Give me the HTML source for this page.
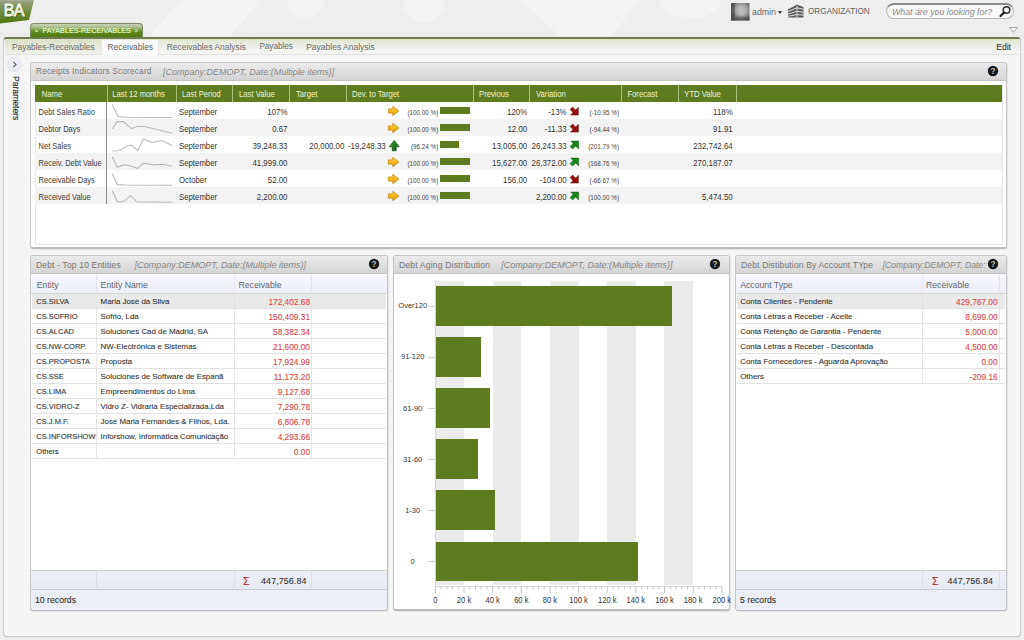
<!DOCTYPE html>
<html><head><meta charset="utf-8"><title>BA</title><style>
html,body{margin:0;padding:0;}
body{width:1024px;height:640px;overflow:hidden;position:relative;background:#efefef;font-family:"Liberation Sans",sans-serif;}
.a{position:absolute;box-sizing:border-box;}
.t{position:absolute;white-space:nowrap;}
.s{-webkit-text-stroke:0.1px currentColor;}
svg{position:absolute;overflow:visible;}
</style></head><body>
<div class="a" style="left:0px;top:0px;width:1024px;height:40px;background:linear-gradient(#efefef,#ededed);"></div>
<svg style="left:0;top:0" width="1024" height="38"><g fill="#ffffff" opacity="0.35"><ellipse cx="306" cy="-2" rx="19" ry="20"/><ellipse cx="424" cy="-2" rx="21" ry="24"/><polygon points="520,0 640,0 612,36 560,36"/><polygon points="180,0 260,0 230,36 150,36"/><ellipse cx="690" cy="4" rx="30" ry="14"/></g></svg>
<svg style="left:0;top:0" width="40" height="30"><defs><linearGradient id="lg" x1="0" y1="0" x2="0" y2="1"><stop offset="0" stop-color="#a4ac94"/><stop offset="0.12" stop-color="#8e9c74"/><stop offset="0.55" stop-color="#6f8a3a"/><stop offset="1" stop-color="#4f7510"/></linearGradient></defs>
<polygon points="0,0 34,0 29,20 0,23.5" fill="url(#lg)"/>
<text x="4.3" y="16.8" font-family="Liberation Sans" font-size="16" fill="#2f4a08" stroke="#2f4a08" stroke-width="1.2" letter-spacing="-0.6" opacity="0.55">BA</text><text x="3.8" y="16.3" font-family="Liberation Sans" font-size="16" fill="#f4f6e4" stroke="#f4f6e4" stroke-width="0.8" letter-spacing="-0.6">BA</text></svg>
<svg style="left:731px;top:2.5px" width="19" height="18"><defs><radialGradient id="av" cx="0.55" cy="0.4" r="0.7"><stop offset="0" stop-color="#c8c8c8"/><stop offset="0.5" stop-color="#9a9a9a"/><stop offset="1" stop-color="#3c3c3c"/></radialGradient></defs>
<rect x="0" y="0" width="18.5" height="17.5" fill="url(#av)"/>
<rect x="0" y="0" width="4" height="17.5" fill="#4a4a4a" opacity="0.6"/><rect x="0" y="14" width="18.5" height="3.5" fill="#555" opacity="0.5"/>
<ellipse cx="10.5" cy="8" rx="4" ry="5" fill="#b8b8b8" opacity="0.7"/></svg>
<div class="t" style="left:752px;top:1.50px;line-height:20px;font-size:8.8px;color:#6a6a6a;font-weight:normal;font-style:normal;">admin</div>
<svg style="left:778px;top:10.5px" width="5" height="4"><polygon points="0,0 4,0 2,3" fill="#333"/></svg>
<svg style="left:788px;top:4px" width="17" height="15">
<polygon points="0,5.5 9,0.5 15.5,3 15.5,13.6 0,13.6" fill="#5c5c5c"/>
<g stroke="#ececec" stroke-width="0.95" fill="none">
<polyline points="0,7.6 9,3.8 15.5,5.4"/><polyline points="0,10.1 9,7.3 15.5,8.3"/><polyline points="0,12.3 9,10.6 15.5,11.1"/>
<line x1="9" y1="1.5" x2="9" y2="13.6" stroke-width="0.8"/>
</g></svg>
<div class="t" style="left:808px;top:1.50px;line-height:20px;font-size:8.2px;color:#5e5e5e;font-weight:normal;font-style:normal;transform:scaleY(1.08);transform-origin:left center;">ORGANIZATION</div>
<div class="a" style="left:886px;top:3px;width:128px;height:16px;border:1px solid #b8b8b8;border-top:2px solid #8a8a8a;border-radius:9px;background:linear-gradient(#f6f6f6,#fafafa);"></div>
<div class="t" style="left:892px;top:1.80px;line-height:20px;font-size:8.8px;color:#8a8a8a;font-weight:normal;font-style:italic;">What are you looking for?</div>
<svg style="left:999px;top:5px" width="13" height="13"><circle cx="7.5" cy="5" r="3.3" fill="none" stroke="#333" stroke-width="1.6"/><line x1="5.2" y1="7.4" x2="1.5" y2="11" stroke="#222" stroke-width="2.2" stroke-linecap="round"/></svg>
<svg style="left:1009px;top:27px" width="10" height="7"><polygon points="0.5,0.5 8.5,0.5 4.5,5.5" fill="#fafafa" stroke="#aaa" stroke-width="1"/></svg>
<div class="a" style="left:30px;top:23.3px;width:113px;height:14.7px;border-radius:4px 4px 0 0;border:1px solid #7d8c64;border-bottom:none;background:linear-gradient(#c9d3b8 0%,#aebf90 22%,#779a3c 45%,#5b8119 65%,#517910 100%);"></div>
<div class="t" style="left:35px;top:20.80px;line-height:20px;font-size:8px;color:#d6f0a8;font-weight:normal;font-style:normal;">&#8226;</div>
<div class="t" style="left:42.4px;top:21.00px;line-height:20px;font-size:7.25px;color:#dcefbc;font-weight:normal;font-style:normal;transform:scaleY(1.08);transform-origin:left center;text-shadow:0 0 0.6px #dcefbc;">PAYABLES-RECEIVABLES</div>
<div class="t" style="left:134px;top:21.00px;line-height:20px;font-size:8px;color:#d8e4b0;font-weight:normal;font-style:normal;">&#215;</div>
<div class="a" style="left:3px;top:37px;width:1018px;height:599.5px;border:1.5px solid #cdcdcd;border-top:2px solid #6f7c4d;border-radius:4px 4px 4px 4px;background:#f5f5f5;box-shadow:0 1px 1px rgba(0,0,0,0.06);"></div>
<div class="a" style="left:4.5px;top:39px;width:1015.0px;height:16px;background:linear-gradient(#dfe6c8 0px,#e4e8d8 2px,#ecede6 7px,#f4f4f2 13px);border-bottom:1px solid #e2e2e2;"></div>
<div class="a" style="left:4.5px;top:39px;width:96.5px;height:15px;background:linear-gradient(#dde4c4 0px,#dfe3d0 3px,#e6e9dc 8px,#eff1ea 15px);"></div>
<div class="a" style="left:101px;top:40px;width:58px;height:15px;background:#fcfcfc;border-left:1px solid #e6e6e6;border-right:1px solid #e6e6e6;"></div>
<div class="t" style="left:12px;top:37.00px;line-height:20px;font-size:8.36px;color:#6b6b6b;font-weight:normal;font-style:normal;">Payables-Receivables</div>
<div class="t" style="left:107.6px;top:37.00px;line-height:20px;font-size:8.33px;color:#5a5a5a;font-weight:normal;font-style:normal;">Receivables</div>
<div class="t" style="left:166.8px;top:37.00px;line-height:20px;font-size:8.42px;color:#6b6b6b;font-weight:normal;font-style:normal;">Receivables Analysis</div>
<div class="t" style="left:259.4px;top:37.00px;line-height:20px;font-size:8.17px;color:#6b6b6b;font-weight:normal;font-style:normal;">Payables</div>
<div class="t" style="left:306.2px;top:37.00px;line-height:20px;font-size:8.51px;color:#6b6b6b;font-weight:normal;font-style:normal;">Payables Analysis</div>
<div class="t s" style="right:13px;top:36.50px;line-height:20px;font-size:8.6px;color:#3a3a3a;font-weight:normal;font-style:normal;transform:scaleY(1.1);transform-origin:right center;">Edit</div>
<div class="a" style="left:7px;top:57px;width:15px;height:15px;border-radius:50%;background:radial-gradient(circle at 50% 40%,#f4f6fa,#dfe4ee);border:1px solid #e2e6ee;"></div>
<svg style="left:11px;top:60px" width="8" height="9"><polyline points="2.5,2 5,4.5 2.5,7" fill="none" stroke="#666" stroke-width="1.3"/></svg>
<div class="t" style="left:-6.5px;top:92.8px;width:44px;line-height:10px;height:10px;font-size:8.6px;color:#333;transform:rotate(90deg);text-align:center;-webkit-text-stroke:0.15px #333;">Parameters</div>
<div class="a" style="left:30px;top:62px;width:977px;height:187px;border:1px solid #c4c4c4;border-bottom:2px solid #bcbcbc;border-radius:3px;background:#fff;box-shadow:1px 1px 1px rgba(0,0,0,0.07);"></div>
<div class="a" style="left:31px;top:63px;width:975px;height:17.5px;border-radius:3px 3px 0 0;background:linear-gradient(#ebebeb,#e2e2e2 40%,#d4d4d4);border-bottom:1px solid #c4c4c4;"></div>
<div class="t" style="left:36px;top:61.80px;line-height:20px;font-size:8.264999999999999px;color:#777;font-weight:normal;font-style:normal;letter-spacing:0.1914px;">Receipts Indicators Scorecard</div>
<div class="t" style="left:163px;top:61.50px;line-height:20px;font-size:9.0px;color:#888;font-weight:normal;font-style:italic;">[Company:DEMOPT, Date:(Multiple items)]</div>
<svg style="left:987px;top:64.5px" width="12" height="12"><circle cx="6" cy="6" r="5.2" fill="#1a1a1a"/><text x="6.1" y="8.9" font-family="Liberation Sans" font-size="8.2" font-weight="bold" fill="#b8b8b8" text-anchor="middle">?</text></svg>
<div class="a" style="left:34.5px;top:83px;width:968.5px;height:162px;border:1px solid #e6e6e6;border-top-color:#fff;background:#fff;"></div>
<div class="a" style="left:35px;top:85px;width:967px;height:17px;background:#5e7b1f;"></div>
<div class="a" style="left:106.5px;top:85px;width:1.0px;height:17px;background:#a9bf7a;"></div>
<div class="a" style="left:175.5px;top:85px;width:1.0px;height:17px;background:#a9bf7a;"></div>
<div class="a" style="left:232px;top:85px;width:1px;height:17px;background:#a9bf7a;"></div>
<div class="a" style="left:289px;top:85px;width:1px;height:17px;background:#a9bf7a;"></div>
<div class="a" style="left:346px;top:85px;width:1px;height:17px;background:#a9bf7a;"></div>
<div class="a" style="left:472.5px;top:85px;width:1.0px;height:17px;background:#a9bf7a;"></div>
<div class="a" style="left:529px;top:85px;width:1px;height:17px;background:#a9bf7a;"></div>
<div class="a" style="left:621px;top:85px;width:1px;height:17px;background:#a9bf7a;"></div>
<div class="a" style="left:678px;top:85px;width:1px;height:17px;background:#a9bf7a;"></div>
<div class="a" style="left:735.5px;top:85px;width:1.0px;height:17px;background:#a9bf7a;"></div>
<div class="t" style="left:41.8px;top:85.20px;line-height:20px;font-size:7.7px;color:#eef3dc;font-weight:normal;font-style:normal;transform:scaleY(1.1);transform-origin:left center;">Name</div>
<div class="t" style="left:112.3px;top:85.20px;line-height:20px;font-size:7.7px;color:#eef3dc;font-weight:normal;font-style:normal;transform:scaleY(1.1);transform-origin:left center;">Last 12 months</div>
<div class="t" style="left:182px;top:85.20px;line-height:20px;font-size:7.7px;color:#eef3dc;font-weight:normal;font-style:normal;transform:scaleY(1.1);transform-origin:left center;">Last Period</div>
<div class="t" style="left:239px;top:85.20px;line-height:20px;font-size:7.7px;color:#eef3dc;font-weight:normal;font-style:normal;transform:scaleY(1.1);transform-origin:left center;">Last Value</div>
<div class="t" style="left:296px;top:85.20px;line-height:20px;font-size:7.7px;color:#eef3dc;font-weight:normal;font-style:normal;transform:scaleY(1.1);transform-origin:left center;">Target</div>
<div class="t" style="left:352px;top:85.20px;line-height:20px;font-size:7.7px;color:#eef3dc;font-weight:normal;font-style:normal;transform:scaleY(1.1);transform-origin:left center;">Dev. to Target</div>
<div class="t" style="left:479px;top:85.20px;line-height:20px;font-size:7.7px;color:#eef3dc;font-weight:normal;font-style:normal;transform:scaleY(1.1);transform-origin:left center;">Previous</div>
<div class="t" style="left:536px;top:85.20px;line-height:20px;font-size:7.7px;color:#eef3dc;font-weight:normal;font-style:normal;transform:scaleY(1.1);transform-origin:left center;">Variation</div>
<div class="t" style="left:627.4px;top:85.20px;line-height:20px;font-size:7.7px;color:#eef3dc;font-weight:normal;font-style:normal;transform:scaleY(1.1);transform-origin:left center;">Forecast</div>
<div class="t" style="left:684.3px;top:85.20px;line-height:20px;font-size:7.7px;color:#eef3dc;font-weight:normal;font-style:normal;transform:scaleY(1.1);transform-origin:left center;">YTD Value</div>
<div class="a" style="left:35px;top:119px;width:967px;height:17px;background:#f3f3f3;"></div>
<div class="a" style="left:35px;top:153px;width:967px;height:17px;background:#f3f3f3;"></div>
<div class="a" style="left:35px;top:187px;width:967px;height:17px;background:#f3f3f3;"></div>
<div class="a" style="left:106px;top:102px;width:1.2000000000000028px;height:102px;background:#8c8c8c;"></div>
<div class="t" style="left:38.6px;top:102.50px;line-height:20px;font-size:7.5px;color:#3a3a3a;font-weight:normal;font-style:normal;transform:scaleY(1.12);transform-origin:left center;">Debt Sales Ratio</div>
<div class="t" style="left:179px;top:102.50px;line-height:20px;font-size:7.8px;color:#333;font-weight:normal;font-style:normal;transform:scaleY(1.12);transform-origin:left center;">September</div>
<div class="t" style="right:736.5px;top:102.50px;line-height:20px;font-size:7.9px;color:#333;font-weight:normal;font-style:normal;transform:scaleY(1.12);transform-origin:right center;">107%</div>
<div class="t" style="right:585.7px;top:102.50px;line-height:20px;font-size:6.3px;color:#444;font-weight:normal;font-style:normal;transform:scaleY(1.12);transform-origin:right center;">(100.00 %)</div>
<div class="a" style="left:440px;top:107.3px;width:30px;height:7.200000000000003px;background:#5e7b1f;"></div>
<div class="t" style="right:496.79999999999995px;top:102.50px;line-height:20px;font-size:7.9px;color:#333;font-weight:normal;font-style:normal;transform:scaleY(1.12);transform-origin:right center;">120%</div>
<div class="t" style="right:457.4px;top:102.50px;line-height:20px;font-size:7.9px;color:#333;font-weight:normal;font-style:normal;transform:scaleY(1.12);transform-origin:right center;">-13%</div>
<div class="t" style="right:405px;top:102.50px;line-height:20px;font-size:6.3px;color:#444;font-weight:normal;font-style:normal;transform:scaleY(1.12);transform-origin:right center;">(-10.95 %)</div>
<div class="t" style="right:291.29999999999995px;top:102.50px;line-height:20px;font-size:7.9px;color:#333;font-weight:normal;font-style:normal;transform:scaleY(1.12);transform-origin:right center;">118%</div>
<svg style="left:387.8px;top:105.6px" width="12" height="11"><defs><linearGradient id="ya0" x1="0" y1="0" x2="0" y2="1"><stop offset="0" stop-color="#ffd650"/><stop offset="0.6" stop-color="#f3b414"/><stop offset="1" stop-color="#d89010"/></linearGradient></defs><polygon points="0.4,2.9 4.8,2.9 4.8,0.3 10.9,5 4.8,9.7 4.8,7.1 0.4,7.1" fill="url(#ya0)" stroke="#c98a12" stroke-width="0.8" stroke-linejoin="round"/></svg>
<svg style="left:570.2px;top:106.7px" width="10" height="10"><g fill="#9a1010" stroke="#5a0808" stroke-width="0.5" stroke-linejoin="round"><polygon points="8.4,0.3 8.4,8.1 0.6,8.1"/><polygon points="0.1,2.6 2.6,0.1 6.2,3.7 3.7,6.2"/></g></svg>
<div class="t" style="left:38.6px;top:119.50px;line-height:20px;font-size:7.5px;color:#3a3a3a;font-weight:normal;font-style:normal;transform:scaleY(1.12);transform-origin:left center;">Debtor Days</div>
<div class="t" style="left:179px;top:119.50px;line-height:20px;font-size:7.8px;color:#333;font-weight:normal;font-style:normal;transform:scaleY(1.12);transform-origin:left center;">September</div>
<div class="t" style="right:736.5px;top:119.50px;line-height:20px;font-size:7.9px;color:#333;font-weight:normal;font-style:normal;transform:scaleY(1.12);transform-origin:right center;">0.67</div>
<div class="t" style="right:585.7px;top:119.50px;line-height:20px;font-size:6.3px;color:#444;font-weight:normal;font-style:normal;transform:scaleY(1.12);transform-origin:right center;">(100.00 %)</div>
<div class="a" style="left:440px;top:124.3px;width:30px;height:7.200000000000003px;background:#5e7b1f;"></div>
<div class="t" style="right:496.79999999999995px;top:119.50px;line-height:20px;font-size:7.9px;color:#333;font-weight:normal;font-style:normal;transform:scaleY(1.12);transform-origin:right center;">12.00</div>
<div class="t" style="right:457.4px;top:119.50px;line-height:20px;font-size:7.9px;color:#333;font-weight:normal;font-style:normal;transform:scaleY(1.12);transform-origin:right center;">-11.33</div>
<div class="t" style="right:405px;top:119.50px;line-height:20px;font-size:6.3px;color:#444;font-weight:normal;font-style:normal;transform:scaleY(1.12);transform-origin:right center;">(-94.44 %)</div>
<div class="t" style="right:291.29999999999995px;top:119.50px;line-height:20px;font-size:7.9px;color:#333;font-weight:normal;font-style:normal;transform:scaleY(1.12);transform-origin:right center;">91.91</div>
<svg style="left:387.8px;top:122.6px" width="12" height="11"><defs><linearGradient id="ya1" x1="0" y1="0" x2="0" y2="1"><stop offset="0" stop-color="#ffd650"/><stop offset="0.6" stop-color="#f3b414"/><stop offset="1" stop-color="#d89010"/></linearGradient></defs><polygon points="0.4,2.9 4.8,2.9 4.8,0.3 10.9,5 4.8,9.7 4.8,7.1 0.4,7.1" fill="url(#ya1)" stroke="#c98a12" stroke-width="0.8" stroke-linejoin="round"/></svg>
<svg style="left:570.2px;top:123.7px" width="10" height="10"><g fill="#9a1010" stroke="#5a0808" stroke-width="0.5" stroke-linejoin="round"><polygon points="8.4,0.3 8.4,8.1 0.6,8.1"/><polygon points="0.1,2.6 2.6,0.1 6.2,3.7 3.7,6.2"/></g></svg>
<div class="t" style="left:38.6px;top:136.50px;line-height:20px;font-size:7.5px;color:#3a3a3a;font-weight:normal;font-style:normal;transform:scaleY(1.12);transform-origin:left center;">Net Sales</div>
<div class="t" style="left:179px;top:136.50px;line-height:20px;font-size:7.8px;color:#333;font-weight:normal;font-style:normal;transform:scaleY(1.12);transform-origin:left center;">September</div>
<div class="t" style="right:736.5px;top:136.50px;line-height:20px;font-size:7.9px;color:#333;font-weight:normal;font-style:normal;transform:scaleY(1.12);transform-origin:right center;">39,248.33</div>
<div class="t" style="right:679.6px;top:136.50px;line-height:20px;font-size:7.9px;color:#333;font-weight:normal;font-style:normal;transform:scaleY(1.12);transform-origin:right center;">20,000.00</div>
<div class="t" style="right:638.3px;top:136.50px;line-height:20px;font-size:7.9px;color:#333;font-weight:normal;font-style:normal;transform:scaleY(1.12);transform-origin:right center;">-19,248.33</div>
<div class="t" style="right:585.7px;top:136.50px;line-height:20px;font-size:6.3px;color:#444;font-weight:normal;font-style:normal;transform:scaleY(1.12);transform-origin:right center;">(96.24 %)</div>
<div class="a" style="left:440px;top:141.3px;width:19px;height:7.199999999999989px;background:#5e7b1f;"></div>
<div class="t" style="right:496.79999999999995px;top:136.50px;line-height:20px;font-size:7.9px;color:#333;font-weight:normal;font-style:normal;transform:scaleY(1.12);transform-origin:right center;">13,005.00</div>
<div class="t" style="right:457.4px;top:136.50px;line-height:20px;font-size:7.9px;color:#333;font-weight:normal;font-style:normal;transform:scaleY(1.12);transform-origin:right center;">26,243.33</div>
<div class="t" style="right:405px;top:136.50px;line-height:20px;font-size:6.3px;color:#444;font-weight:normal;font-style:normal;transform:scaleY(1.12);transform-origin:right center;">(201.79 %)</div>
<div class="t" style="right:291.29999999999995px;top:136.50px;line-height:20px;font-size:7.9px;color:#333;font-weight:normal;font-style:normal;transform:scaleY(1.12);transform-origin:right center;">232,742.64</div>
<svg style="left:388.6px;top:139.7px" width="11" height="12"><defs><linearGradient id="ga2" x1="0" y1="0" x2="1" y2="1"><stop offset="0" stop-color="#3aa03a"/><stop offset="1" stop-color="#0c5e0c"/></linearGradient></defs><polygon points="5.2,0.4 10.2,6.8 7.2,6.8 7.2,10.8 3.2,10.8 3.2,6.8 0.2,6.8" fill="url(#ga2)" stroke="#0a4a0a" stroke-width="0.7" stroke-linejoin="round"/></svg>
<svg style="left:570.2px;top:140.7px" width="10" height="10"><g fill="#1a8a1a" stroke="#0a4a0a" stroke-width="0.5" stroke-linejoin="round"><polygon points="8.6,7.9 8.6,0.1 0.8,0.1"/><polygon points="0.1,5.6 2.6,8.1 6.2,4.5 3.7,2"/></g></svg>
<div class="t" style="left:38.6px;top:153.50px;line-height:20px;font-size:7.5px;color:#3a3a3a;font-weight:normal;font-style:normal;transform:scaleY(1.12);transform-origin:left center;">Receiv. Debt Value</div>
<div class="t" style="left:179px;top:153.50px;line-height:20px;font-size:7.8px;color:#333;font-weight:normal;font-style:normal;transform:scaleY(1.12);transform-origin:left center;">September</div>
<div class="t" style="right:736.5px;top:153.50px;line-height:20px;font-size:7.9px;color:#333;font-weight:normal;font-style:normal;transform:scaleY(1.12);transform-origin:right center;">41,999.00</div>
<div class="t" style="right:585.7px;top:153.50px;line-height:20px;font-size:6.3px;color:#444;font-weight:normal;font-style:normal;transform:scaleY(1.12);transform-origin:right center;">(100.00 %)</div>
<div class="a" style="left:440px;top:158.3px;width:30px;height:7.199999999999989px;background:#5e7b1f;"></div>
<div class="t" style="right:496.79999999999995px;top:153.50px;line-height:20px;font-size:7.9px;color:#333;font-weight:normal;font-style:normal;transform:scaleY(1.12);transform-origin:right center;">15,627.00</div>
<div class="t" style="right:457.4px;top:153.50px;line-height:20px;font-size:7.9px;color:#333;font-weight:normal;font-style:normal;transform:scaleY(1.12);transform-origin:right center;">26,372.00</div>
<div class="t" style="right:405px;top:153.50px;line-height:20px;font-size:6.3px;color:#444;font-weight:normal;font-style:normal;transform:scaleY(1.12);transform-origin:right center;">(168.76 %)</div>
<div class="t" style="right:291.29999999999995px;top:153.50px;line-height:20px;font-size:7.9px;color:#333;font-weight:normal;font-style:normal;transform:scaleY(1.12);transform-origin:right center;">270,187.07</div>
<svg style="left:387.8px;top:156.6px" width="12" height="11"><defs><linearGradient id="ya3" x1="0" y1="0" x2="0" y2="1"><stop offset="0" stop-color="#ffd650"/><stop offset="0.6" stop-color="#f3b414"/><stop offset="1" stop-color="#d89010"/></linearGradient></defs><polygon points="0.4,2.9 4.8,2.9 4.8,0.3 10.9,5 4.8,9.7 4.8,7.1 0.4,7.1" fill="url(#ya3)" stroke="#c98a12" stroke-width="0.8" stroke-linejoin="round"/></svg>
<svg style="left:570.2px;top:157.7px" width="10" height="10"><g fill="#1a8a1a" stroke="#0a4a0a" stroke-width="0.5" stroke-linejoin="round"><polygon points="8.6,7.9 8.6,0.1 0.8,0.1"/><polygon points="0.1,5.6 2.6,8.1 6.2,4.5 3.7,2"/></g></svg>
<div class="t" style="left:38.6px;top:170.50px;line-height:20px;font-size:7.5px;color:#3a3a3a;font-weight:normal;font-style:normal;transform:scaleY(1.12);transform-origin:left center;">Receivable Days</div>
<div class="t" style="left:179px;top:170.50px;line-height:20px;font-size:7.8px;color:#333;font-weight:normal;font-style:normal;transform:scaleY(1.12);transform-origin:left center;">October</div>
<div class="t" style="right:736.5px;top:170.50px;line-height:20px;font-size:7.9px;color:#333;font-weight:normal;font-style:normal;transform:scaleY(1.12);transform-origin:right center;">52.00</div>
<div class="t" style="right:585.7px;top:170.50px;line-height:20px;font-size:6.3px;color:#444;font-weight:normal;font-style:normal;transform:scaleY(1.12);transform-origin:right center;">(100.00 %)</div>
<div class="a" style="left:440px;top:175.3px;width:30px;height:7.199999999999989px;background:#5e7b1f;"></div>
<div class="t" style="right:496.79999999999995px;top:170.50px;line-height:20px;font-size:7.9px;color:#333;font-weight:normal;font-style:normal;transform:scaleY(1.12);transform-origin:right center;">156.00</div>
<div class="t" style="right:457.4px;top:170.50px;line-height:20px;font-size:7.9px;color:#333;font-weight:normal;font-style:normal;transform:scaleY(1.12);transform-origin:right center;">-104.00</div>
<div class="t" style="right:405px;top:170.50px;line-height:20px;font-size:6.3px;color:#444;font-weight:normal;font-style:normal;transform:scaleY(1.12);transform-origin:right center;">(-66.67 %)</div>
<svg style="left:387.8px;top:173.6px" width="12" height="11"><defs><linearGradient id="ya4" x1="0" y1="0" x2="0" y2="1"><stop offset="0" stop-color="#ffd650"/><stop offset="0.6" stop-color="#f3b414"/><stop offset="1" stop-color="#d89010"/></linearGradient></defs><polygon points="0.4,2.9 4.8,2.9 4.8,0.3 10.9,5 4.8,9.7 4.8,7.1 0.4,7.1" fill="url(#ya4)" stroke="#c98a12" stroke-width="0.8" stroke-linejoin="round"/></svg>
<svg style="left:570.2px;top:174.7px" width="10" height="10"><g fill="#9a1010" stroke="#5a0808" stroke-width="0.5" stroke-linejoin="round"><polygon points="8.4,0.3 8.4,8.1 0.6,8.1"/><polygon points="0.1,2.6 2.6,0.1 6.2,3.7 3.7,6.2"/></g></svg>
<div class="t" style="left:38.6px;top:187.50px;line-height:20px;font-size:7.5px;color:#3a3a3a;font-weight:normal;font-style:normal;transform:scaleY(1.12);transform-origin:left center;">Received Value</div>
<div class="t" style="left:179px;top:187.50px;line-height:20px;font-size:7.8px;color:#333;font-weight:normal;font-style:normal;transform:scaleY(1.12);transform-origin:left center;">September</div>
<div class="t" style="right:736.5px;top:187.50px;line-height:20px;font-size:7.9px;color:#333;font-weight:normal;font-style:normal;transform:scaleY(1.12);transform-origin:right center;">2,200.00</div>
<div class="t" style="right:585.7px;top:187.50px;line-height:20px;font-size:6.3px;color:#444;font-weight:normal;font-style:normal;transform:scaleY(1.12);transform-origin:right center;">(100.00 %)</div>
<div class="a" style="left:440px;top:192.3px;width:30px;height:7.199999999999989px;background:#5e7b1f;"></div>
<div class="t" style="right:457.4px;top:187.50px;line-height:20px;font-size:7.9px;color:#333;font-weight:normal;font-style:normal;transform:scaleY(1.12);transform-origin:right center;">2,200.00</div>
<div class="t" style="right:405px;top:187.50px;line-height:20px;font-size:6.3px;color:#444;font-weight:normal;font-style:normal;transform:scaleY(1.12);transform-origin:right center;">(100.00 %)</div>
<div class="t" style="right:291.29999999999995px;top:187.50px;line-height:20px;font-size:7.9px;color:#333;font-weight:normal;font-style:normal;transform:scaleY(1.12);transform-origin:right center;">5,474.50</div>
<svg style="left:387.8px;top:190.6px" width="12" height="11"><defs><linearGradient id="ya5" x1="0" y1="0" x2="0" y2="1"><stop offset="0" stop-color="#ffd650"/><stop offset="0.6" stop-color="#f3b414"/><stop offset="1" stop-color="#d89010"/></linearGradient></defs><polygon points="0.4,2.9 4.8,2.9 4.8,0.3 10.9,5 4.8,9.7 4.8,7.1 0.4,7.1" fill="url(#ya5)" stroke="#c98a12" stroke-width="0.8" stroke-linejoin="round"/></svg>
<svg style="left:570.2px;top:191.7px" width="10" height="10"><g fill="#1a8a1a" stroke="#0a4a0a" stroke-width="0.5" stroke-linejoin="round"><polygon points="8.6,7.9 8.6,0.1 0.8,0.1"/><polygon points="0.1,5.6 2.6,8.1 6.2,4.5 3.7,2"/></g></svg>
<svg style="left:0;top:0" width="1024" height="640"><polyline fill="none" stroke="#b9b9b9" stroke-width="1.1" points="112.3,104.4 118.0,116.5 125.0,117.2 172.2,117.5"/><polyline fill="none" stroke="#b9b9b9" stroke-width="1.1" points="112.3,128.7 117.3,121.6 123.4,121.6 131.6,128.7 137.6,126.3 145.8,126.7 172.2,133.2"/><polyline fill="none" stroke="#b9b9b9" stroke-width="1.1" points="112.3,151.0 118.4,150.7 127.5,146.0 131.6,145.0 137.6,150.7 143.3,138.9 151.9,142.5 162.0,140.5 172.2,145.4"/><polyline fill="none" stroke="#b9b9b9" stroke-width="1.1" points="112.3,156.8 117.3,167.3 123.4,164.9 129.5,165.7 137.6,168.3 143.7,163.2 153.9,164.9 162.0,164.3 172.2,166.3"/><polyline fill="none" stroke="#b9b9b9" stroke-width="1.1" points="112.3,173.8 117.3,184.6 125.0,185.0 172.2,185.2"/><polyline fill="none" stroke="#b9b9b9" stroke-width="1.1" points="112.3,190.7 117.3,201.8 123.4,201.8 130.5,195.7 136.6,201.8 172.2,202.2"/></svg>
<div class="a" style="left:30px;top:255px;width:358px;height:356px;border:1px solid #c4c4c4;border-bottom:2px solid #bcbcbc;border-radius:3px;background:#fff;box-shadow:1px 1px 1px rgba(0,0,0,0.07);"></div>
<div class="a" style="left:31px;top:256px;width:356px;height:17.5px;border-radius:3px 3px 0 0;background:linear-gradient(#ebebeb,#e2e2e2 40%,#d4d4d4);border-bottom:1px solid #c4c4c4;"></div>
<div class="t" style="left:36px;top:254.80px;line-height:20px;font-size:8.455px;color:#777;font-weight:normal;font-style:normal;letter-spacing:0.1958px;">Debt - Top 10 Entities</div>
<div class="t" style="left:134.7px;top:254.50px;line-height:20px;font-size:9.0px;color:#888;font-weight:normal;font-style:italic;">[Company:DEMOPT, Date:(Multiple items)]</div>
<svg style="left:368px;top:257.5px" width="12" height="12"><circle cx="6" cy="6" r="5.2" fill="#1a1a1a"/><text x="6.1" y="8.9" font-family="Liberation Sans" font-size="8.2" font-weight="bold" fill="#b8b8b8" text-anchor="middle">?</text></svg>
<div class="a" style="left:31px;top:274px;width:356px;height:336px;background:#fff;border-radius:0 0 3px 3px;"></div>
<div class="a" style="left:31px;top:274px;width:356px;height:20px;background:linear-gradient(#f7f8fc,#eceef6);border-bottom:1px solid #d6d6d6;"></div>
<div class="a" style="left:96px;top:274px;width:1px;height:20px;background:#e2e4ea;"></div>
<div class="a" style="left:234px;top:274px;width:1px;height:20px;background:#e2e4ea;"></div>
<div class="a" style="left:311px;top:274px;width:1px;height:20px;background:#e2e4ea;"></div>
<div class="t" style="left:36.75px;top:274.50px;line-height:20px;font-size:8.7px;color:#5f6676;font-weight:normal;font-style:normal;">Entity</div>
<div class="t" style="left:100.6px;top:274.50px;line-height:20px;font-size:8.7px;color:#5f6676;font-weight:normal;font-style:normal;">Entity Name</div>
<div class="t" style="left:238.5px;top:274.50px;line-height:20px;font-size:8.7px;color:#5f6676;font-weight:normal;font-style:normal;">Receivable</div>
<div class="a" style="left:32px;top:293.5px;width:354px;height:15.0px;background:#e9e9e9;border-bottom:1px solid #e2e2e2;"></div>
<div class="a" style="left:96px;top:293.5px;width:1px;height:15.0px;background:#e4e4e4;"></div>
<div class="a" style="left:234px;top:293.5px;width:1px;height:15.0px;background:#e4e4e4;"></div>
<div class="a" style="left:311px;top:293.5px;width:1px;height:15.0px;background:#e4e4e4;"></div>
<div class="t s" style="left:36.3px;top:291.90px;line-height:20px;font-size:7.5px;color:#333;font-weight:normal;font-style:normal;">CS.SILVA</div>
<div class="t s" style="left:100.6px;top:291.90px;line-height:20px;font-size:7.9px;color:#333;font-weight:normal;font-style:normal;">Maria Jos&eacute; da Silva</div>
<div class="t s" style="right:714px;top:291.90px;line-height:20px;font-size:8.3px;color:#d44848;font-weight:normal;font-style:normal;">172,402.68</div>
<div class="a" style="left:32px;top:308.5px;width:354px;height:15.0px;border-bottom:1px solid #e2e2e2;"></div>
<div class="a" style="left:96px;top:308.5px;width:1px;height:15.0px;background:#e4e4e4;"></div>
<div class="a" style="left:234px;top:308.5px;width:1px;height:15.0px;background:#e4e4e4;"></div>
<div class="a" style="left:311px;top:308.5px;width:1px;height:15.0px;background:#e4e4e4;"></div>
<div class="t s" style="left:36.3px;top:306.90px;line-height:20px;font-size:7.5px;color:#333;font-weight:normal;font-style:normal;">CS.SOFRIO</div>
<div class="t s" style="left:100.6px;top:306.90px;line-height:20px;font-size:7.9px;color:#333;font-weight:normal;font-style:normal;">Sofrio, Lda</div>
<div class="t s" style="right:714px;top:306.90px;line-height:20px;font-size:8.3px;color:#d44848;font-weight:normal;font-style:normal;">150,409.31</div>
<div class="a" style="left:32px;top:323.5px;width:354px;height:15.0px;border-bottom:1px solid #e2e2e2;"></div>
<div class="a" style="left:96px;top:323.5px;width:1px;height:15.0px;background:#e4e4e4;"></div>
<div class="a" style="left:234px;top:323.5px;width:1px;height:15.0px;background:#e4e4e4;"></div>
<div class="a" style="left:311px;top:323.5px;width:1px;height:15.0px;background:#e4e4e4;"></div>
<div class="t s" style="left:36.3px;top:321.90px;line-height:20px;font-size:7.5px;color:#333;font-weight:normal;font-style:normal;">CS.ALCAD</div>
<div class="t s" style="left:100.6px;top:321.90px;line-height:20px;font-size:7.9px;color:#333;font-weight:normal;font-style:normal;">Soluciones Cad de Madrid, SA</div>
<div class="t s" style="right:714px;top:321.90px;line-height:20px;font-size:8.3px;color:#d44848;font-weight:normal;font-style:normal;">58,382.34</div>
<div class="a" style="left:32px;top:338.5px;width:354px;height:15.0px;border-bottom:1px solid #e2e2e2;"></div>
<div class="a" style="left:96px;top:338.5px;width:1px;height:15.0px;background:#e4e4e4;"></div>
<div class="a" style="left:234px;top:338.5px;width:1px;height:15.0px;background:#e4e4e4;"></div>
<div class="a" style="left:311px;top:338.5px;width:1px;height:15.0px;background:#e4e4e4;"></div>
<div class="t s" style="left:36.3px;top:336.90px;line-height:20px;font-size:7.5px;color:#333;font-weight:normal;font-style:normal;">CS.NW-CORP.</div>
<div class="t s" style="left:100.6px;top:336.90px;line-height:20px;font-size:7.9px;color:#333;font-weight:normal;font-style:normal;">NW-Electr&oacute;nica e Sistemas</div>
<div class="t s" style="right:714px;top:336.90px;line-height:20px;font-size:8.3px;color:#d44848;font-weight:normal;font-style:normal;">21,600.00</div>
<div class="a" style="left:32px;top:353.5px;width:354px;height:15.0px;border-bottom:1px solid #e2e2e2;"></div>
<div class="a" style="left:96px;top:353.5px;width:1px;height:15.0px;background:#e4e4e4;"></div>
<div class="a" style="left:234px;top:353.5px;width:1px;height:15.0px;background:#e4e4e4;"></div>
<div class="a" style="left:311px;top:353.5px;width:1px;height:15.0px;background:#e4e4e4;"></div>
<div class="t s" style="left:36.3px;top:351.90px;line-height:20px;font-size:7.5px;color:#333;font-weight:normal;font-style:normal;">CS.PROPOSTA</div>
<div class="t s" style="left:100.6px;top:351.90px;line-height:20px;font-size:7.9px;color:#333;font-weight:normal;font-style:normal;">Proposta</div>
<div class="t s" style="right:714px;top:351.90px;line-height:20px;font-size:8.3px;color:#d44848;font-weight:normal;font-style:normal;">17,924.99</div>
<div class="a" style="left:32px;top:368.5px;width:354px;height:15.0px;border-bottom:1px solid #e2e2e2;"></div>
<div class="a" style="left:96px;top:368.5px;width:1px;height:15.0px;background:#e4e4e4;"></div>
<div class="a" style="left:234px;top:368.5px;width:1px;height:15.0px;background:#e4e4e4;"></div>
<div class="a" style="left:311px;top:368.5px;width:1px;height:15.0px;background:#e4e4e4;"></div>
<div class="t s" style="left:36.3px;top:366.90px;line-height:20px;font-size:7.5px;color:#333;font-weight:normal;font-style:normal;">CS.SSE</div>
<div class="t s" style="left:100.6px;top:366.90px;line-height:20px;font-size:7.9px;color:#333;font-weight:normal;font-style:normal;">Soluciones de Software de Espan&atilde;</div>
<div class="t s" style="right:714px;top:366.90px;line-height:20px;font-size:8.3px;color:#d44848;font-weight:normal;font-style:normal;">11,173.20</div>
<div class="a" style="left:32px;top:383.5px;width:354px;height:15.0px;border-bottom:1px solid #e2e2e2;"></div>
<div class="a" style="left:96px;top:383.5px;width:1px;height:15.0px;background:#e4e4e4;"></div>
<div class="a" style="left:234px;top:383.5px;width:1px;height:15.0px;background:#e4e4e4;"></div>
<div class="a" style="left:311px;top:383.5px;width:1px;height:15.0px;background:#e4e4e4;"></div>
<div class="t s" style="left:36.3px;top:381.90px;line-height:20px;font-size:7.5px;color:#333;font-weight:normal;font-style:normal;">CS.LIMA</div>
<div class="t s" style="left:100.6px;top:381.90px;line-height:20px;font-size:7.9px;color:#333;font-weight:normal;font-style:normal;">Empreendimentos do Lima</div>
<div class="t s" style="right:714px;top:381.90px;line-height:20px;font-size:8.3px;color:#d44848;font-weight:normal;font-style:normal;">9,127.68</div>
<div class="a" style="left:32px;top:398.5px;width:354px;height:15.0px;border-bottom:1px solid #e2e2e2;"></div>
<div class="a" style="left:96px;top:398.5px;width:1px;height:15.0px;background:#e4e4e4;"></div>
<div class="a" style="left:234px;top:398.5px;width:1px;height:15.0px;background:#e4e4e4;"></div>
<div class="a" style="left:311px;top:398.5px;width:1px;height:15.0px;background:#e4e4e4;"></div>
<div class="t s" style="left:36.3px;top:396.90px;line-height:20px;font-size:7.5px;color:#333;font-weight:normal;font-style:normal;">CS.VIDRO-Z</div>
<div class="t s" style="left:100.6px;top:396.90px;line-height:20px;font-size:7.9px;color:#333;font-weight:normal;font-style:normal;">Vidro Z- Vidraria Especializada,Lda</div>
<div class="t s" style="right:714px;top:396.90px;line-height:20px;font-size:8.3px;color:#d44848;font-weight:normal;font-style:normal;">7,290.78</div>
<div class="a" style="left:32px;top:413.5px;width:354px;height:15.0px;border-bottom:1px solid #e2e2e2;"></div>
<div class="a" style="left:96px;top:413.5px;width:1px;height:15.0px;background:#e4e4e4;"></div>
<div class="a" style="left:234px;top:413.5px;width:1px;height:15.0px;background:#e4e4e4;"></div>
<div class="a" style="left:311px;top:413.5px;width:1px;height:15.0px;background:#e4e4e4;"></div>
<div class="t s" style="left:36.3px;top:411.90px;line-height:20px;font-size:7.5px;color:#333;font-weight:normal;font-style:normal;">CS.J.M.F.</div>
<div class="t s" style="left:100.6px;top:411.90px;line-height:20px;font-size:7.9px;color:#333;font-weight:normal;font-style:normal;">Jos&eacute; Maria Fernandes &amp; Filhos, Lda.</div>
<div class="t s" style="right:714px;top:411.90px;line-height:20px;font-size:8.3px;color:#d44848;font-weight:normal;font-style:normal;">6,806.78</div>
<div class="a" style="left:32px;top:428.5px;width:354px;height:15.0px;border-bottom:1px solid #e2e2e2;"></div>
<div class="a" style="left:96px;top:428.5px;width:1px;height:15.0px;background:#e4e4e4;"></div>
<div class="a" style="left:234px;top:428.5px;width:1px;height:15.0px;background:#e4e4e4;"></div>
<div class="a" style="left:311px;top:428.5px;width:1px;height:15.0px;background:#e4e4e4;"></div>
<div class="t s" style="left:36.3px;top:426.90px;line-height:20px;font-size:7.5px;color:#333;font-weight:normal;font-style:normal;">CS.INFORSHOW</div>
<div class="t s" style="left:100.6px;top:426.90px;line-height:20px;font-size:7.9px;color:#333;font-weight:normal;font-style:normal;">Inforshow, Inform&aacute;tica Comunica&ccedil;&atilde;o</div>
<div class="t s" style="right:714px;top:426.90px;line-height:20px;font-size:8.3px;color:#d44848;font-weight:normal;font-style:normal;">4,293.66</div>
<div class="a" style="left:32px;top:443.5px;width:354px;height:15.0px;border-bottom:1px solid #e2e2e2;"></div>
<div class="a" style="left:96px;top:443.5px;width:1px;height:15.0px;background:#e4e4e4;"></div>
<div class="a" style="left:234px;top:443.5px;width:1px;height:15.0px;background:#e4e4e4;"></div>
<div class="a" style="left:311px;top:443.5px;width:1px;height:15.0px;background:#e4e4e4;"></div>
<div class="t s" style="left:36.3px;top:441.90px;line-height:20px;font-size:7.5px;color:#333;font-weight:normal;font-style:normal;">Others</div>
<div class="t s" style="left:100.6px;top:441.90px;line-height:20px;font-size:7.9px;color:#333;font-weight:normal;font-style:normal;"></div>
<div class="t s" style="right:714px;top:441.90px;line-height:20px;font-size:8.3px;color:#d44848;font-weight:normal;font-style:normal;">0.00</div>
<div class="a" style="left:31px;top:570px;width:356px;height:20px;background:linear-gradient(#eef0f7,#e8eaf3);border-top:1px solid #d2d4da;border-bottom:1px solid #c9cbd2;"></div>
<div class="a" style="left:96px;top:571px;width:1px;height:19px;background:#dcdee6;"></div>
<div class="a" style="left:234px;top:571px;width:1px;height:19px;background:#dcdee6;"></div>
<div class="a" style="left:311px;top:571px;width:1px;height:19px;background:#dcdee6;"></div>
<div class="t s" style="left:243px;top:570.80px;line-height:20px;font-size:10.5px;color:#b82a2a;font-weight:normal;font-style:normal;">&#931;</div>
<div class="t s" style="right:717.5px;top:570.50px;line-height:20px;font-size:8.9px;color:#333;font-weight:normal;font-style:normal;letter-spacing:0.1px;">447,756.84</div>
<div class="a" style="left:31px;top:590px;width:356px;height:20px;background:#eceef5;border-radius:0 0 3px 3px;"></div>
<div class="t s" style="left:35px;top:590.00px;line-height:20px;font-size:8.7px;color:#333;font-weight:normal;font-style:normal;">10 records</div>
<div class="a" style="left:735px;top:255px;width:272px;height:356px;border:1px solid #c4c4c4;border-bottom:2px solid #bcbcbc;border-radius:3px;background:#fff;box-shadow:1px 1px 1px rgba(0,0,0,0.07);"></div>
<div class="a" style="left:736px;top:256px;width:270px;height:17.5px;border-radius:3px 3px 0 0;background:linear-gradient(#ebebeb,#e2e2e2 40%,#d4d4d4);border-bottom:1px solid #c4c4c4;"></div>
<div class="t" style="left:741px;top:254.80px;line-height:20px;font-size:8.455px;color:#777;font-weight:normal;font-style:normal;letter-spacing:0.1958px;">Debt Distibution By Account TYpe</div>
<div class="t" style="left:882.7px;top:254.50px;line-height:20px;font-size:9.0px;color:#888;font-weight:normal;font-style:italic;"><span style="font-size:8.6px">[Company:DEMOPT, Date:</span></div>
<svg style="left:987px;top:257.5px" width="12" height="12"><circle cx="6" cy="6" r="5.2" fill="#1a1a1a"/><text x="6.1" y="8.9" font-family="Liberation Sans" font-size="8.2" font-weight="bold" fill="#b8b8b8" text-anchor="middle">?</text></svg>
<div class="a" style="left:736px;top:274px;width:270px;height:336px;background:#fff;border-radius:0 0 3px 3px;"></div>
<div class="a" style="left:736px;top:274px;width:270px;height:20px;background:linear-gradient(#f7f8fc,#eceef6);border-bottom:1px solid #d6d6d6;"></div>
<div class="a" style="left:922px;top:274px;width:1px;height:20px;background:#e2e4ea;"></div>
<div class="a" style="left:999px;top:274px;width:1px;height:20px;background:#e2e4ea;"></div>
<div class="t" style="left:740.2px;top:274.50px;line-height:20px;font-size:8.7px;color:#5f6676;font-weight:normal;font-style:normal;">Account Type</div>
<div class="t" style="left:926px;top:274.50px;line-height:20px;font-size:8.7px;color:#5f6676;font-weight:normal;font-style:normal;">Receivable</div>
<div class="a" style="left:737px;top:293.5px;width:268px;height:15.0px;background:#e9e9e9;border-bottom:1px solid #e2e2e2;"></div>
<div class="a" style="left:922px;top:293.5px;width:1px;height:15.0px;background:#e4e4e4;"></div>
<div class="a" style="left:999px;top:293.5px;width:1px;height:15.0px;background:#e4e4e4;"></div>
<div class="t s" style="left:740.2px;top:291.90px;line-height:20px;font-size:7.9px;color:#333;font-weight:normal;font-style:normal;">Conta Clientes - Pendente</div>
<div class="t s" style="right:26.399999999999977px;top:291.90px;line-height:20px;font-size:8.3px;color:#d44848;font-weight:normal;font-style:normal;">429,767.00</div>
<div class="a" style="left:737px;top:308.5px;width:268px;height:15.0px;border-bottom:1px solid #e2e2e2;"></div>
<div class="a" style="left:922px;top:308.5px;width:1px;height:15.0px;background:#e4e4e4;"></div>
<div class="a" style="left:999px;top:308.5px;width:1px;height:15.0px;background:#e4e4e4;"></div>
<div class="t s" style="left:740.2px;top:306.90px;line-height:20px;font-size:7.9px;color:#333;font-weight:normal;font-style:normal;">Conta Letras a Receber - Aceite</div>
<div class="t s" style="right:26.399999999999977px;top:306.90px;line-height:20px;font-size:8.3px;color:#d44848;font-weight:normal;font-style:normal;">8,699.00</div>
<div class="a" style="left:737px;top:323.5px;width:268px;height:15.0px;border-bottom:1px solid #e2e2e2;"></div>
<div class="a" style="left:922px;top:323.5px;width:1px;height:15.0px;background:#e4e4e4;"></div>
<div class="a" style="left:999px;top:323.5px;width:1px;height:15.0px;background:#e4e4e4;"></div>
<div class="t s" style="left:740.2px;top:321.90px;line-height:20px;font-size:7.9px;color:#333;font-weight:normal;font-style:normal;">Conta Reten&ccedil;&atilde;o de Garantia - Pendente</div>
<div class="t s" style="right:26.399999999999977px;top:321.90px;line-height:20px;font-size:8.3px;color:#d44848;font-weight:normal;font-style:normal;">5,000.00</div>
<div class="a" style="left:737px;top:338.5px;width:268px;height:15.0px;border-bottom:1px solid #e2e2e2;"></div>
<div class="a" style="left:922px;top:338.5px;width:1px;height:15.0px;background:#e4e4e4;"></div>
<div class="a" style="left:999px;top:338.5px;width:1px;height:15.0px;background:#e4e4e4;"></div>
<div class="t s" style="left:740.2px;top:336.90px;line-height:20px;font-size:7.9px;color:#333;font-weight:normal;font-style:normal;">Conta Letras a Receber - Descontada</div>
<div class="t s" style="right:26.399999999999977px;top:336.90px;line-height:20px;font-size:8.3px;color:#d44848;font-weight:normal;font-style:normal;">4,500.00</div>
<div class="a" style="left:737px;top:353.5px;width:268px;height:15.0px;border-bottom:1px solid #e2e2e2;"></div>
<div class="a" style="left:922px;top:353.5px;width:1px;height:15.0px;background:#e4e4e4;"></div>
<div class="a" style="left:999px;top:353.5px;width:1px;height:15.0px;background:#e4e4e4;"></div>
<div class="t s" style="left:740.2px;top:351.90px;line-height:20px;font-size:7.9px;color:#333;font-weight:normal;font-style:normal;">Conta Fornecedores - Aguarda Aprova&ccedil;&atilde;o</div>
<div class="t s" style="right:26.399999999999977px;top:351.90px;line-height:20px;font-size:8.3px;color:#d44848;font-weight:normal;font-style:normal;">0.00</div>
<div class="a" style="left:737px;top:368.5px;width:268px;height:15.0px;border-bottom:1px solid #e2e2e2;"></div>
<div class="a" style="left:922px;top:368.5px;width:1px;height:15.0px;background:#e4e4e4;"></div>
<div class="a" style="left:999px;top:368.5px;width:1px;height:15.0px;background:#e4e4e4;"></div>
<div class="t s" style="left:740.2px;top:366.90px;line-height:20px;font-size:7.9px;color:#333;font-weight:normal;font-style:normal;">Others</div>
<div class="t s" style="right:26.399999999999977px;top:366.90px;line-height:20px;font-size:8.3px;color:#d44848;font-weight:normal;font-style:normal;">-209.16</div>
<div class="a" style="left:736px;top:570px;width:270px;height:20px;background:linear-gradient(#eef0f7,#e8eaf3);border-top:1px solid #d2d4da;border-bottom:1px solid #c9cbd2;"></div>
<div class="a" style="left:922px;top:571px;width:1px;height:19px;background:#dcdee6;"></div>
<div class="a" style="left:999px;top:571px;width:1px;height:19px;background:#dcdee6;"></div>
<div class="t s" style="left:932px;top:570.80px;line-height:20px;font-size:10.5px;color:#b82a2a;font-weight:normal;font-style:normal;">&#931;</div>
<div class="t s" style="right:31px;top:570.50px;line-height:20px;font-size:8.9px;color:#333;font-weight:normal;font-style:normal;letter-spacing:0.1px;">447,756.84</div>
<div class="a" style="left:736px;top:590px;width:270px;height:20px;background:#eceef5;border-radius:0 0 3px 3px;"></div>
<div class="t s" style="left:740px;top:590.00px;line-height:20px;font-size:8.7px;color:#333;font-weight:normal;font-style:normal;">5 records</div>
<div class="a" style="left:393px;top:255px;width:337px;height:356px;border:1px solid #c4c4c4;border-bottom:2px solid #bcbcbc;border-radius:3px;background:#fff;box-shadow:1px 1px 1px rgba(0,0,0,0.07);"></div>
<div class="a" style="left:394px;top:256px;width:335px;height:17.5px;border-radius:3px 3px 0 0;background:linear-gradient(#ebebeb,#e2e2e2 40%,#d4d4d4);border-bottom:1px solid #c4c4c4;"></div>
<div class="t" style="left:399px;top:254.80px;line-height:20px;font-size:8.5215px;color:#777;font-weight:normal;font-style:normal;letter-spacing:0.19734000000000002px;">Debt Aging Distribution</div>
<div class="t" style="left:501.3px;top:254.50px;line-height:20px;font-size:9.0px;color:#888;font-weight:normal;font-style:italic;">[Company:DEMOPT, Date:(Multiple items)]</div>
<svg style="left:709px;top:257.5px" width="12" height="12"><circle cx="6" cy="6" r="5.2" fill="#1a1a1a"/><text x="6.1" y="8.9" font-family="Liberation Sans" font-size="8.2" font-weight="bold" fill="#b8b8b8" text-anchor="middle">?</text></svg>
<div class="a" style="left:435.5px;top:280.5px;width:28.5px;height:304.5px;background:#ebebeb;"></div>
<div class="a" style="left:492.5px;top:280.5px;width:28.5px;height:304.5px;background:#ebebeb;"></div>
<div class="a" style="left:550px;top:280.5px;width:28.5px;height:304.5px;background:#ebebeb;"></div>
<div class="a" style="left:607px;top:280.5px;width:28.5px;height:304.5px;background:#ebebeb;"></div>
<div class="a" style="left:664px;top:280.5px;width:28.5px;height:304.5px;background:#ebebeb;"></div>
<div class="a" style="left:435.4px;top:286.0px;width:237.10000000000002px;height:39.60000000000002px;background:#5e7b1f;"></div>
<div class="t" style="left:212.7px;width:400px;text-align:center;top:296.30px;line-height:20px;font-size:7.5px;color:#333;font-weight:normal;font-style:normal;transform:scaleY(1.08);transform-origin:center center;">Over120</div>
<div class="a" style="left:428px;top:305.8px;width:7px;height:1.0px;background:#d0d0d0;"></div>
<div class="a" style="left:435.4px;top:337.1px;width:45.200000000000045px;height:39.60000000000002px;background:#5e7b1f;"></div>
<div class="t" style="left:212.7px;width:400px;text-align:center;top:347.40px;line-height:20px;font-size:7.5px;color:#333;font-weight:normal;font-style:normal;transform:scaleY(1.08);transform-origin:center center;">91-120</div>
<div class="a" style="left:428px;top:356.90000000000003px;width:7px;height:1.0px;background:#d0d0d0;"></div>
<div class="a" style="left:435.4px;top:388.2px;width:54.60000000000002px;height:39.60000000000002px;background:#5e7b1f;"></div>
<div class="t" style="left:212.7px;width:400px;text-align:center;top:398.50px;line-height:20px;font-size:7.5px;color:#333;font-weight:normal;font-style:normal;transform:scaleY(1.08);transform-origin:center center;">61-90</div>
<div class="a" style="left:428px;top:408.0px;width:7px;height:1.0px;background:#d0d0d0;"></div>
<div class="a" style="left:435.4px;top:439.3px;width:42.30000000000001px;height:39.60000000000002px;background:#5e7b1f;"></div>
<div class="t" style="left:212.7px;width:400px;text-align:center;top:449.60px;line-height:20px;font-size:7.5px;color:#333;font-weight:normal;font-style:normal;transform:scaleY(1.08);transform-origin:center center;">31-60</div>
<div class="a" style="left:428px;top:459.1px;width:7px;height:1.0px;background:#d0d0d0;"></div>
<div class="a" style="left:435.4px;top:490.4px;width:59.60000000000002px;height:39.60000000000002px;background:#5e7b1f;"></div>
<div class="t" style="left:212.7px;width:400px;text-align:center;top:500.70px;line-height:20px;font-size:7.5px;color:#333;font-weight:normal;font-style:normal;transform:scaleY(1.08);transform-origin:center center;">1-30</div>
<div class="a" style="left:428px;top:510.2px;width:7px;height:1.0px;background:#d0d0d0;"></div>
<div class="a" style="left:435.4px;top:541.5px;width:203.0px;height:39.60000000000002px;background:#5e7b1f;"></div>
<div class="t" style="left:212.7px;width:400px;text-align:center;top:551.80px;line-height:20px;font-size:7.5px;color:#333;font-weight:normal;font-style:normal;transform:scaleY(1.08);transform-origin:center center;">0</div>
<div class="a" style="left:428px;top:561.3px;width:7px;height:1.0px;background:#d0d0d0;"></div>
<div class="a" style="left:434.9px;top:280.5px;width:1.0px;height:313.0px;background:#d4d4d4;"></div>
<div class="a" style="left:435.4px;top:585.5px;width:287.0px;height:1.0px;background:#d8d8d8;"></div>
<svg style="left:0;top:0" width="1024" height="640"><g stroke="#c4c4c4" stroke-width="1"><line x1="435.4" y1="586" x2="435.4" y2="593"/><line x1="441.1" y1="586" x2="441.1" y2="589.5"/><line x1="446.9" y1="586" x2="446.9" y2="589.5"/><line x1="452.6" y1="586" x2="452.6" y2="589.5"/><line x1="458.3" y1="586" x2="458.3" y2="589.5"/><line x1="464.0" y1="586" x2="464.0" y2="593"/><line x1="469.8" y1="586" x2="469.8" y2="589.5"/><line x1="475.5" y1="586" x2="475.5" y2="589.5"/><line x1="481.2" y1="586" x2="481.2" y2="589.5"/><line x1="487.0" y1="586" x2="487.0" y2="589.5"/><line x1="492.7" y1="586" x2="492.7" y2="593"/><line x1="498.4" y1="586" x2="498.4" y2="589.5"/><line x1="504.1" y1="586" x2="504.1" y2="589.5"/><line x1="509.9" y1="586" x2="509.9" y2="589.5"/><line x1="515.6" y1="586" x2="515.6" y2="589.5"/><line x1="521.3" y1="586" x2="521.3" y2="593"/><line x1="527.0" y1="586" x2="527.0" y2="589.5"/><line x1="532.8" y1="586" x2="532.8" y2="589.5"/><line x1="538.5" y1="586" x2="538.5" y2="589.5"/><line x1="544.2" y1="586" x2="544.2" y2="589.5"/><line x1="550.0" y1="586" x2="550.0" y2="593"/><line x1="555.7" y1="586" x2="555.7" y2="589.5"/><line x1="561.4" y1="586" x2="561.4" y2="589.5"/><line x1="567.1" y1="586" x2="567.1" y2="589.5"/><line x1="572.9" y1="586" x2="572.9" y2="589.5"/><line x1="578.6" y1="586" x2="578.6" y2="593"/><line x1="584.3" y1="586" x2="584.3" y2="589.5"/><line x1="590.1" y1="586" x2="590.1" y2="589.5"/><line x1="595.8" y1="586" x2="595.8" y2="589.5"/><line x1="601.5" y1="586" x2="601.5" y2="589.5"/><line x1="607.2" y1="586" x2="607.2" y2="593"/><line x1="613.0" y1="586" x2="613.0" y2="589.5"/><line x1="618.7" y1="586" x2="618.7" y2="589.5"/><line x1="624.4" y1="586" x2="624.4" y2="589.5"/><line x1="630.2" y1="586" x2="630.2" y2="589.5"/><line x1="635.9" y1="586" x2="635.9" y2="593"/><line x1="641.6" y1="586" x2="641.6" y2="589.5"/><line x1="647.3" y1="586" x2="647.3" y2="589.5"/><line x1="653.1" y1="586" x2="653.1" y2="589.5"/><line x1="658.8" y1="586" x2="658.8" y2="589.5"/><line x1="664.5" y1="586" x2="664.5" y2="593"/><line x1="670.2" y1="586" x2="670.2" y2="589.5"/><line x1="676.0" y1="586" x2="676.0" y2="589.5"/><line x1="681.7" y1="586" x2="681.7" y2="589.5"/><line x1="687.4" y1="586" x2="687.4" y2="589.5"/><line x1="693.2" y1="586" x2="693.2" y2="593"/><line x1="698.9" y1="586" x2="698.9" y2="589.5"/><line x1="704.6" y1="586" x2="704.6" y2="589.5"/><line x1="710.3" y1="586" x2="710.3" y2="589.5"/><line x1="716.1" y1="586" x2="716.1" y2="589.5"/><line x1="721.8" y1="586" x2="721.8" y2="593"/></g></svg>
<div class="t" style="left:235.39999999999998px;width:400px;text-align:center;top:591.00px;line-height:20px;font-size:7.6px;color:#333;font-weight:normal;font-style:normal;transform:scaleY(1.1);transform-origin:center center;">0</div>
<div class="t" style="left:264.03999999999996px;width:400px;text-align:center;top:591.00px;line-height:20px;font-size:7.6px;color:#333;font-weight:normal;font-style:normal;transform:scaleY(1.1);transform-origin:center center;">20 k</div>
<div class="t" style="left:292.67999999999995px;width:400px;text-align:center;top:591.00px;line-height:20px;font-size:7.6px;color:#333;font-weight:normal;font-style:normal;transform:scaleY(1.1);transform-origin:center center;">40 k</div>
<div class="t" style="left:321.31999999999994px;width:400px;text-align:center;top:591.00px;line-height:20px;font-size:7.6px;color:#333;font-weight:normal;font-style:normal;transform:scaleY(1.1);transform-origin:center center;">60 k</div>
<div class="t" style="left:349.96000000000004px;width:400px;text-align:center;top:591.00px;line-height:20px;font-size:7.6px;color:#333;font-weight:normal;font-style:normal;transform:scaleY(1.1);transform-origin:center center;">80 k</div>
<div class="t" style="left:378.5999999999999px;width:400px;text-align:center;top:591.00px;line-height:20px;font-size:7.6px;color:#333;font-weight:normal;font-style:normal;transform:scaleY(1.1);transform-origin:center center;">100 k</div>
<div class="t" style="left:407.24px;width:400px;text-align:center;top:591.00px;line-height:20px;font-size:7.6px;color:#333;font-weight:normal;font-style:normal;transform:scaleY(1.1);transform-origin:center center;">120 k</div>
<div class="t" style="left:435.88px;width:400px;text-align:center;top:591.00px;line-height:20px;font-size:7.6px;color:#333;font-weight:normal;font-style:normal;transform:scaleY(1.1);transform-origin:center center;">140 k</div>
<div class="t" style="left:464.52px;width:400px;text-align:center;top:591.00px;line-height:20px;font-size:7.6px;color:#333;font-weight:normal;font-style:normal;transform:scaleY(1.1);transform-origin:center center;">160 k</div>
<div class="t" style="left:493.15999999999997px;width:400px;text-align:center;top:591.00px;line-height:20px;font-size:7.6px;color:#333;font-weight:normal;font-style:normal;transform:scaleY(1.1);transform-origin:center center;">180 k</div>
<div class="t" style="left:521.8px;width:400px;text-align:center;top:591.00px;line-height:20px;font-size:7.6px;color:#333;font-weight:normal;font-style:normal;transform:scaleY(1.1);transform-origin:center center;">200 k</div>
</body></html>
